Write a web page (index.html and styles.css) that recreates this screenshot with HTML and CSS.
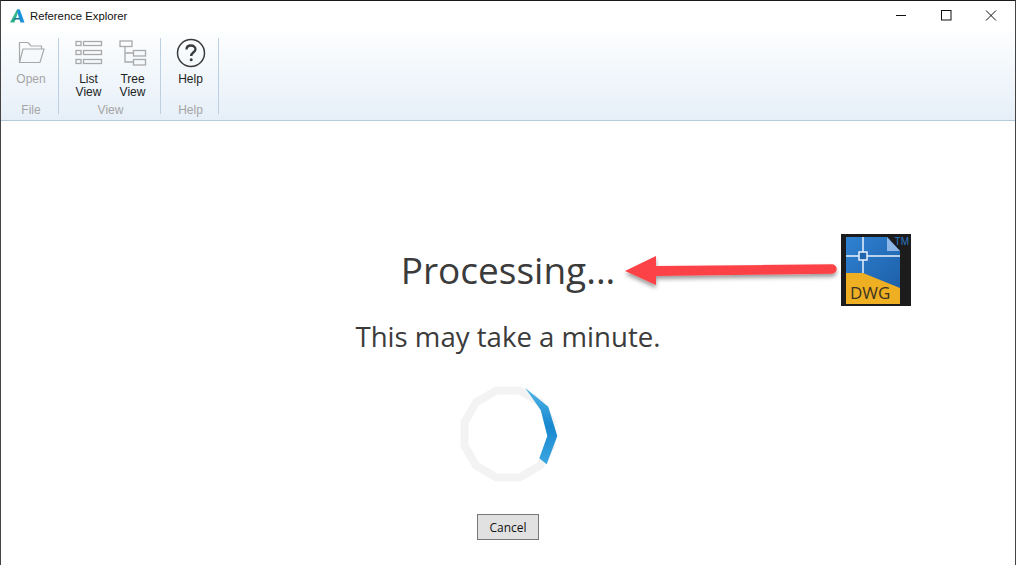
FILE: index.html
```html
<!DOCTYPE html>
<html lang="en">
<head>
<meta charset="utf-8">
<title>Reference Explorer</title>
<link rel="stylesheet" href="styles.css">
</head>
<body>
<div class="window">
  <header class="titlebar">
    <svg class="logo" width="16" height="16" viewBox="0 0 16 16">
      <path d="M1 14.500 L8 1.500 H10 L5.500 14.500 Z" fill="#35b58a"/>
      <path d="M8 1.500 H10.800 L15.500 14.500 H11.500 L9.300 8 Z" fill="#1b93d6"/>
      <path d="M1 14.500 L5 11.500 H11 L11.500 14 L10.500 10 H6 Z" fill="#17708f"/>
    </svg>
    <span class="title">Reference Explorer</span>
    <div class="winbtns">
      <svg width="12" height="12" viewBox="0 0 12 12"><path d="M1 5.500H11" stroke="#111" fill="none"/></svg>
      <svg width="12" height="12" viewBox="0 0 12 12"><rect x="1.500" y="0.500" width="9.500" height="9.500" stroke="#111" fill="none"/></svg>
      <svg width="12" height="12" viewBox="0 0 12 12"><path d="M1 0.500L11 10.500M11 0.500L1 10.500" stroke="#111" fill="none"/></svg>
    </div>
  </header>
  <nav class="ribbon">
    <section class="group group-file">
      <div class="items">
        <div class="item disabled">
          <svg width="28" height="26" viewBox="0 0 28 26"><path d="M2.500 22.500V2.500H11L14 6H24.500V9M2.500 22.500L6 9H27L23 22.500Z" fill="none" stroke="#a9a9a9" stroke-width="1.200"/></svg>
          <span>Open</span>
        </div>
      </div>
      <div class="label">File</div>
    </section>
    <section class="group group-view">
      <div class="items">
        <div class="item">
          <svg width="28" height="26" viewBox="0 0 28 26"><g fill="none" stroke="#a9a9a9" stroke-width="1.300"><rect x="1" y="1.500" width="5" height="4"/><rect x="8.500" y="1.500" width="18" height="4"/><rect x="1" y="10.500" width="5" height="4"/><rect x="8.500" y="10.500" width="18" height="4"/><rect x="1" y="19.500" width="5" height="4"/><rect x="8.500" y="19.500" width="18" height="4"/></g></svg>
          <span>List<br>View</span>
        </div>
        <div class="item">
          <svg width="28" height="26" viewBox="0 0 28 26"><g fill="none" stroke="#a9a9a9" stroke-width="1.300"><rect x="1" y="1" width="12" height="5.500"/><rect x="14.500" y="10.500" width="12" height="5.500"/><rect x="14.500" y="19.500" width="12" height="5.500"/><path d="M6 6.500V22H14.500M6 13H14.500"/></g></svg>
          <span>Tree<br>View</span>
        </div>
      </div>
      <div class="label">View</div>
    </section>
    <section class="group group-help">
      <div class="items">
        <div class="item">
          <svg width="30" height="30" viewBox="0 0 30 30"><circle cx="15" cy="15" r="13.500" fill="none" stroke="#3a3a3a" stroke-width="1.500"/><path d="M10.500 11.500C10.500 8.800 12.600 7.500 15 7.500C17.500 7.500 19.500 9 19.500 11.200C19.500 14.200 15.200 14.400 15.200 18" fill="none" stroke="#3a3a3a" stroke-width="2.300"/><circle cx="15.200" cy="21.800" r="1.500" fill="#3a3a3a"/></svg>
          <span>Help</span>
        </div>
      </div>
      <div class="label">Help</div>
    </section>
  </nav>
  <main class="content">
    <h1 class="heading">Processing...</h1>
    <p class="sub">This may take a minute.</p>
    <svg class="spinner" width="100" height="100" viewBox="0 0 100 100">
      <defs><linearGradient id="spin" x1="0" y1="0" x2="0" y2="1"><stop offset="0" stop-color="#55b8e8"/><stop offset=".5" stop-color="#1787cf"/><stop offset="1" stop-color="#3ba6e0"/></linearGradient></defs>
      <polygon points="38.400,6.500 61.600,6.500 81.800,18.200 93.500,38.400 93.500,61.600 81.800,81.800 61.600,93.500 38.400,93.500 18.200,81.800 6.500,61.600 6.500,38.400 18.200,18.200" fill="none" stroke="#f3f3f3" stroke-width="8"/>
      <polygon points="67,3.700 90.300,22.700 99.300,52 88.700,80.300 81.300,74.300 89.300,52 82.700,26" fill="url(#spin)"/>
    </svg>
    <button class="cancel" type="button">Cancel</button>
  </main>
  <svg class="arrow" width="216" height="44" viewBox="0 0 216 44">
    <defs><filter id="shadow" x="-10%" y="-30%" width="120%" height="170%"><feDropShadow dx="0" dy="3" stdDeviation="2" flood-color="#000" flood-opacity=".4"/></filter></defs>
    <path d="M-1 23 L30 8 V18 L206 16.300 A4.700 4.700 0 0 1 206 25.700 L30 28 V37 Z" fill="#fd4347" filter="url(#shadow)"/>
  </svg>
  <div class="dwg">
    <svg class="dwg-art" width="70" height="72" viewBox="0 0 70 72">
      <rect width="70" height="72" fill="#1c1c1c"/>
      <defs><linearGradient id="blue" x1="0" y1="0" x2="1" y2="1"><stop offset="0" stop-color="#2f82d2"/><stop offset="1" stop-color="#1d5fa8"/></linearGradient></defs>
      <path d="M5 3H46L59 17V56H5Z" fill="url(#blue)"/>
      <path d="M46 3L59 17H46Z" fill="#8db7e6"/>
      <path d="M5 39H22L59 54V70H5Z" fill="#efaf22"/>
      <path d="M5 22H59M22 3V39" stroke="#e9f2fb" stroke-width="1.500" fill="none"/>
      <rect x="18" y="18" width="8" height="8" fill="#1f64ad" stroke="#e9f2fb" stroke-width="1.500"/>
    </svg>
    <span class="tm">TM</span>
    <span class="dwg-text">DWG</span>
  </div>
</div>
</body>
</html>
```
FILE: styles.css
```css
* { box-sizing: border-box; }
html, body { margin: 0; height: 100%; background: #fff; overflow: hidden; }
body { font-family: "Open Sans", "Noto Sans", sans-serif; color: #333; }
.window {
  position: relative;
  width: 1016px;
  height: 565px;
  display: flex;
  flex-direction: column;
  border-top: 1px solid #1a1a1a;
  border-left: 1px solid #444;
  border-right: 1px solid #444;
}
.titlebar {
  height: 30px;
  display: flex;
  align-items: center;
  padding-left: 8px;
  flex: none;
}
.logo { flex: none; }
.title { margin-left: 5px; font: 11.300px "Liberation Sans", Arial, sans-serif; color: #111; }
.winbtns { margin-left: auto; display: flex; gap: 33px; padding-right: 18px; }
.winbtns svg { display: block; }
.ribbon {
  height: 90px;
  flex: none;
  display: flex;
  padding: 7px 0 7px 1px;
  background: linear-gradient(#fdfefe, #e6eff8);
  border-bottom: 1px solid #b4cddd;
}
.group {
  display: flex;
  flex-direction: column;
  padding-left: 2px;
  border-right: 1px solid #bcd0e2;
  height: 76px;
}
.group-file { width: 57px; }
.group-view { width: 102px; }
.group-help { width: 58px; }
.items { flex: 1; display: flex; justify-content: center; }
.item {
  display: flex;
  flex-direction: column;
  align-items: center;
  width: 44px;
  font: 12px/13px "Liberation Sans", Arial, sans-serif;
  color: #222;
  text-align: center;
}
.item svg { height: 30px; margin-bottom: 5px; flex: none; }
.disabled { color: #a5a5a5; }
.label {
  font: 12px/14px "Liberation Sans", Arial, sans-serif;
  color: #a5a5a5;
  text-align: center;
  margin-bottom: -3px;
}
.content {
  flex: 1;
  display: flex;
  flex-direction: column;
  align-items: center;
  padding-top: 123px;
}
.heading { margin: 0; font-size: 37px; font-weight: 400; line-height: 52px; color: #3b3b3b; }
.sub { margin: 21px 0 0; font-size: 27.600px; line-height: 38px; color: #3b3b3b; }
.spinner { margin-top: 29px; display: block; overflow: visible; }
.cancel {
  margin-top: 30px;
  width: 62px;
  height: 26px;
  padding: 0;
  background: #e1e1e1;
  border: 1px solid #777;
  font: 12px "Open Sans", sans-serif;
  color: #111;
}
.arrow { position: absolute; left: 625px; top: 247px; overflow: visible; }
.dwg { position: absolute; left: 840px; top: 233px; width: 70px; height: 72px; }
.dwg-art { display: block; }
.tm { position: absolute; right: 2px; top: 2px; font: 10px "Liberation Sans", sans-serif; color: #2f78c4; }
.dwg-text { position: absolute; left: 9px; bottom: 3px; font: 17px/20px "Open Sans", sans-serif; color: #3a3324; }
```
